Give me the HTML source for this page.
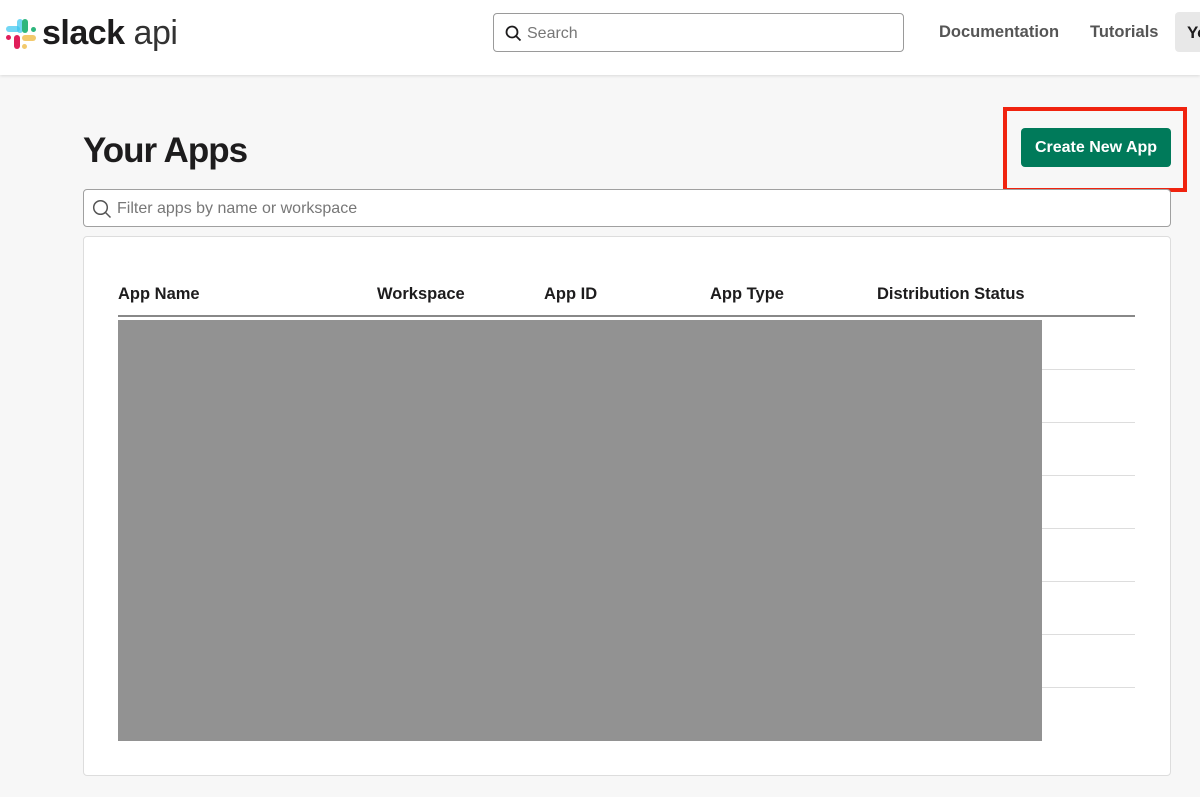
<!DOCTYPE html>
<html><head><meta charset="utf-8"><style>
*{box-sizing:border-box;margin:0;padding:0}
body{width:1200px;height:797px;overflow:hidden;background:#f7f7f7;font-family:"Liberation Sans",sans-serif;position:relative}
.hdr{position:absolute;left:0;top:0;width:1200px;height:75px;background:#fff;box-shadow:0 1px 3px rgba(0,0,0,.12)}
.abs{position:absolute}
.search{left:493px;top:13px;width:411px;height:39px;border:1px solid #9a9a9a;border-radius:4px;background:#fff}
.nav{font-size:16.5px;color:#555;font-weight:bold;top:23px}
.youtab{left:1175px;top:12px;width:40px;height:40px;background:#e8e8e8;border-radius:4px;font-size:17px;font-weight:bold;color:#1d1c1d;padding:11px 0 0 12px}
h1{position:absolute;left:83px;top:131px;font-size:35px;letter-spacing:-1px;color:#1d1c1d;font-weight:bold}
.redbox{left:1003px;top:107px;width:184px;height:85px;border:4px solid #f0230f}
.btn{left:1021px;top:128px;width:150px;height:39px;background:#007a5a;border-radius:4px;color:#fff;font-weight:bold;font-size:16px;text-align:center;line-height:39px}
.filter{left:83px;top:189px;width:1088px;height:38px;border:1px solid #a0a0a0;border-radius:4px;background:#fff}
.card{left:83px;top:236px;width:1088px;height:540px;background:#fff;border:1px solid #ddd;border-radius:4px}
.th{top:285px;font-size:16.5px;font-weight:bold;color:#1d1c1d}
.line{left:118px;width:1017px;height:1px;background:#ddd}
</style></head><body>
<div class="hdr">
  <svg class="abs" style="left:5px;top:18px" width="32" height="32" viewBox="0 0 32 32">
    <rect x="12" y="1" width="6" height="14" rx="3" fill="#36c5f0" opacity=".7"/>
    <rect x="1" y="8" width="14" height="6" rx="3" fill="#36c5f0" opacity=".7"/>
    <rect x="17" y="1" width="6" height="14" rx="3" fill="#2eb67d"/>
    <rect x="26" y="9" width="5" height="5" rx="2.5" fill="#2eb67d"/>
    <rect x="9" y="17" width="6" height="14" rx="3" fill="#e01e5a"/>
    <rect x="1" y="17" width="5" height="5" rx="2.5" fill="#e01e5a"/>
    <rect x="17" y="17" width="14" height="6" rx="3" fill="#ecb22e" opacity=".7"/>
    <rect x="17" y="26" width="5" height="5" rx="2.5" fill="#ecb22e" opacity=".7"/>
  </svg>
  <div class="abs" style="left:42px;top:14px;font-size:34px;color:#1d1c1d;letter-spacing:-.5px"><b>slack</b> <span style="font-weight:normal;color:#333">api</span></div>
  <div class="abs search">
    <svg class="abs" style="left:11px;top:11px" width="17" height="17" viewBox="0 0 17 17"><circle cx="7" cy="7" r="5.5" fill="none" stroke="#1d1c1d" stroke-width="1.8"/><line x1="11" y1="11" x2="15.5" y2="15.5" stroke="#1d1c1d" stroke-width="1.8"/></svg>
    <span class="abs" style="left:33px;top:11px;font-size:16px;color:#777">Search</span>
  </div>
  <div class="abs nav" style="left:939px">Documentation</div>
  <div class="abs nav" style="left:1090px">Tutorials</div>
  <div class="abs youtab">Yo</div>
</div>
<h1>Your Apps</h1>
<div class="abs redbox"></div>
<div class="abs btn">Create New App</div>
<div class="abs filter">
  <svg class="abs" style="left:8px;top:9px" width="20" height="20" viewBox="0 0 20 20"><circle cx="8.5" cy="8.5" r="6.8" fill="none" stroke="#555" stroke-width="1.5"/><line x1="13.5" y1="13.5" x2="18.5" y2="18.5" stroke="#555" stroke-width="1.5"/></svg>
  <span class="abs" style="left:33px;top:10px;font-size:16px;color:#777">Filter apps by name or workspace</span>
</div>
<div class="abs card"></div>
<div class="abs th" style="left:118px">App Name</div>
<div class="abs th" style="left:377px">Workspace</div>
<div class="abs th" style="left:544px">App ID</div>
<div class="abs th" style="left:710px">App Type</div>
<div class="abs th" style="left:877px">Distribution Status</div>
<div class="abs line" style="top:315px;height:2px;background:#888"></div>
<div class="abs line" style="top:369px"></div>
<div class="abs line" style="top:422px"></div>
<div class="abs line" style="top:475px"></div>
<div class="abs line" style="top:528px"></div>
<div class="abs line" style="top:581px"></div>
<div class="abs line" style="top:634px"></div>
<div class="abs line" style="top:687px"></div>
<div class="abs" style="left:118px;top:320px;width:924px;height:421px;background:#929292"></div>
</body></html>
